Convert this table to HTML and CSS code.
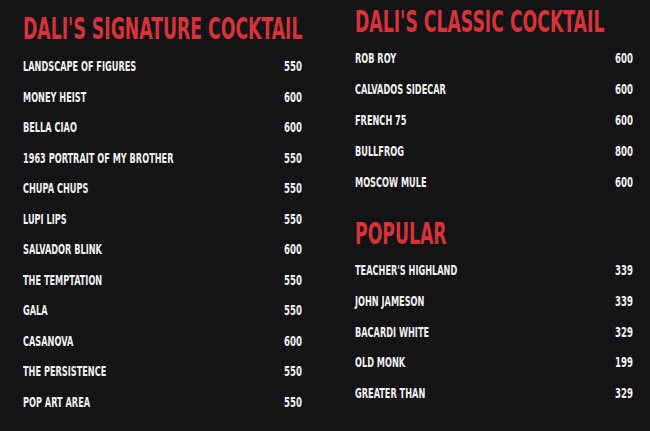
FILE: index.html
```html
<!DOCTYPE html>
<html lang="en">
<head>
<meta charset="utf-8">
<title>Dali's Menu</title>
<link rel="stylesheet" href="styles.css">
</head>
<body>
<main class="menu">
  <section class="col col-left">
    <h2 class="heading"><span class="fit">DALI'S SIGNATURE COCKTAIL</span></h2>
    <ul class="list">
      <li class="row"><span class="name">LANDSCAPE OF FIGURES</span><span class="price">550</span></li>
      <li class="row"><span class="name">MONEY HEIST</span><span class="price">600</span></li>
      <li class="row"><span class="name">BELLA CIAO</span><span class="price">600</span></li>
      <li class="row"><span class="name">1963 PORTRAIT OF MY BROTHER</span><span class="price">550</span></li>
      <li class="row"><span class="name">CHUPA CHUPS</span><span class="price">550</span></li>
      <li class="row"><span class="name">LUPI LIPS</span><span class="price">550</span></li>
      <li class="row"><span class="name">SALVADOR BLINK</span><span class="price">600</span></li>
      <li class="row"><span class="name">THE TEMPTATION</span><span class="price">550</span></li>
      <li class="row"><span class="name">GALA</span><span class="price">550</span></li>
      <li class="row"><span class="name">CASANOVA</span><span class="price">600</span></li>
      <li class="row"><span class="name">THE PERSISTENCE</span><span class="price">550</span></li>
      <li class="row"><span class="name">POP ART AREA</span><span class="price">550</span></li>
    </ul>
  </section>
  <section class="col col-right">
    <h2 class="heading"><span class="fit">DALI'S CLASSIC COCKTAIL</span></h2>
    <ul class="list list-right">
      <li class="row"><span class="name">ROB ROY</span><span class="price">600</span></li>
      <li class="row"><span class="name">CALVADOS SIDECAR</span><span class="price">600</span></li>
      <li class="row"><span class="name">FRENCH 75</span><span class="price">600</span></li>
      <li class="row"><span class="name">BULLFROG</span><span class="price">800</span></li>
      <li class="row"><span class="name">MOSCOW MULE</span><span class="price">600</span></li>
    </ul>
    <h2 class="heading heading-popular"><span class="fit">POPULAR</span></h2>
    <ul class="list list-popular">
      <li class="row"><span class="name">TEACHER'S HIGHLAND</span><span class="price">339</span></li>
      <li class="row"><span class="name">JOHN JAMESON</span><span class="price">339</span></li>
      <li class="row"><span class="name">BACARDI WHITE</span><span class="price">329</span></li>
      <li class="row"><span class="name">OLD MONK</span><span class="price">199</span></li>
      <li class="row"><span class="name">GREATER THAN</span><span class="price">329</span></li>
    </ul>
  </section>
</main>
</body>
</html>
```
FILE: styles.css
```css
html, body {
  margin: 0;
  padding: 0;
  background: #141416;
}
body {
  width: 650px;
  height: 431px;
  overflow: hidden;
  font-family: "DejaVu Sans Condensed", "Liberation Sans Narrow", "Liberation Sans", sans-serif;
  font-weight: 700;
}
.menu {
  display: grid;
  grid-template-columns: 279px 278px;
  column-gap: 53px;
  padding-left: 23px;
}
.col {
  min-width: 0;
}
.col-left {
  padding-top: 13px;
}
.col-right {
  padding-top: 6px;
}
.heading {
  margin: 0;
  height: 31px;
  font-size: 19.2px;
  line-height: 31px;
  font-weight: 700;
  color: #d8333b;
  white-space: nowrap;
}
.heading .fit {
  display: inline-block;
  transform: scaleY(1.615);
  transform-origin: left 14.7px;
}
.list {
  list-style: none;
  margin: 8px 0 0;
  padding: 0;
}
.list-right {
  margin-top: 6px;
}
.heading-popular {
  margin-top: 20px;
}
.list-popular {
  margin-top: 7px;
}
.row {
  display: flex;
  justify-content: space-between;
  height: 30.55px;
  line-height: 30.55px;
  font-size: 13.3px;
  color: #f2f2f2;
  white-space: nowrap;
}
.list-right .row {
  height: 31px;
  line-height: 31px;
}
.list-popular .row {
  height: 30.8px;
  line-height: 30.8px;
}
.name {
  display: inline-block;
  transform: scaleX(0.685);
  transform-origin: left center;
}
.price {
  display: inline-block;
  transform: scaleX(0.72);
  transform-origin: right center;
}
```
